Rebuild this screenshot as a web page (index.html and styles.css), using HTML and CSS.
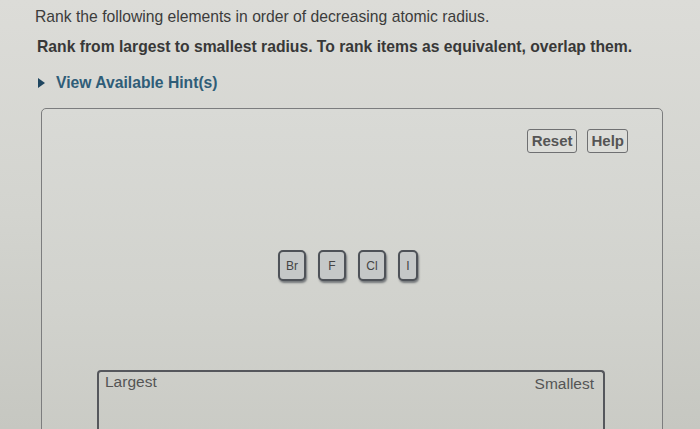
FILE: index.html
```html
<!DOCTYPE html>
<html>
<head>
<meta charset="utf-8">
<link rel="stylesheet" href="styles.css">
</head>
<body>
<div class="page">
  <p class="q1">Rank the following elements in order of decreasing atomic radius.</p>
  <p class="q2">Rank from largest to smallest radius. To rank items as equivalent, overlap them.</p>
  <div class="hint"><span class="tri"></span><span class="hint-text">View Available Hint(s)</span></div>
  <div class="panel">
    <div class="toolbar">
      <span class="btn">Reset</span>
      <span class="btn tight">Help</span>
    </div>
    <div class="tiles">
      <span class="tile">Br</span>
      <span class="tile">F</span>
      <span class="tile">Cl</span>
      <span class="tile narrow">I</span>
    </div>
    <div class="rank">
      <span class="lbl">Largest</span>
      <span class="lbl right">Smallest</span>
    </div>
  </div>
</div>
</body>
</html>
```
FILE: styles.css
```css
html, body {
  margin: 0;
  padding: 0;
  height: 100%;
  overflow: hidden;
}
body {
  background: linear-gradient(180deg, #dcdcd8 0%, #d3d4cf 50%, #c6c7c1 100%);
  font-family: "Liberation Sans", Arial, sans-serif;
  color: #3a3a3a;
}
.page {
  padding: 8px 0 0 0;
}
.q1 {
  margin: 0 0 0 35px;
  font-size: 15.7px;
  line-height: 18px;
  color: #3c3c3c;
}
.q2 {
  margin: 12px 0 0 37px;
  font-size: 15.7px;
  font-weight: bold;
  line-height: 18px;
  color: #383838;
}
.hint {
  margin: 18px 0 0 38px;
  display: flex;
  align-items: center;
  gap: 11px;
  height: 18px;
}
.tri {
  width: 0;
  height: 0;
  border-top: 5px solid transparent;
  border-bottom: 5px solid transparent;
  border-left: 7px solid #1f4660;
}
.hint-text {
  font-size: 15.7px;
  font-weight: bold;
  color: #2f5d78;
}
.panel {
  margin: 16px 0 0 41px;
  width: 622px;
  height: 340px;
  border: 1px solid #7c7d7e;
  border-radius: 5px;
  background: linear-gradient(180deg, #d9dad6 0%, #d1d2cd 60%, #c9cac4 100%);
  box-sizing: border-box;
  display: flex;
  flex-direction: column;
}
.toolbar {
  display: flex;
  justify-content: flex-end;
  gap: 10px;
  padding: 20px 34px 0 0;
}
.btn {
  display: inline-block;
  height: 24px;
  line-height: 22px;
  padding: 0 4px;
  box-sizing: border-box;
  border: 1px solid #6f7072;
  border-radius: 3px;
  font-size: 15px;
  font-weight: bold;
  color: #555;
  background: #dcddd9;
}
.btn.tight {
  padding: 0 3px;
}
.tiles {
  display: flex;
  justify-content: center;
  gap: 12px;
  margin-top: 97px;
  padding-right: 8px;
}
.tile {
  width: 28px;
  height: 31px;
  box-sizing: border-box;
  border: 2px solid #4e5258;
  border-radius: 5px;
  background: #c5c8c8;
  box-shadow: 1px 2px 2px rgba(40, 45, 55, 0.55);
  font-size: 12px;
  color: #444;
  display: flex;
  align-items: center;
  justify-content: center;
}
.tile.narrow {
  width: 20px;
}
.rank {
  margin: 89px 0 0 55px;
  width: 508px;
  flex: 1;
  border: 2px solid #55575c;
  border-bottom: none;
  border-radius: 4px 4px 0 0;
  display: flex;
  justify-content: space-between;
  align-items: flex-start;
  padding: 1px 9px 0 6px;
  box-sizing: border-box;
}
.lbl {
  font-size: 15.5px;
  color: #555;
}
.lbl.right {
  margin-top: 2px;
}
```
